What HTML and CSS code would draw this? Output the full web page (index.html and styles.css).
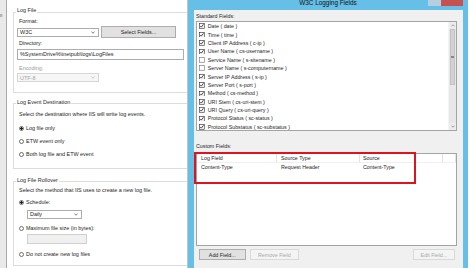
FILE: index.html
```html
<!DOCTYPE html>
<html>
<head>
<meta charset="utf-8">
<link rel="stylesheet" href="styles.css">
</head>
<body>
<div class="screen">
  <div class="edge"><span class="edge-text">m</span></div>

  <div class="left">
    <fieldset class="group g1">
      <legend>Log File</legend>
      <div class="lbl l-format">Format:</div>
      <div class="row">
        <div class="combo c-format"><span>W3C</span><svg class="chev" viewBox="0 0 4 3" width="4" height="3"><path d="M0.4 0.7 L2 2.2 L3.6 0.7"/></svg></div>
        <div class="btn sel-btn">Select Fields...</div>
      </div>
      <div class="lbl l-dir">Directory:</div>
      <div class="textbox dir">%SystemDrive%\inetpub\logs\LogFiles</div>
      <div class="lbl l-enc disabled">Encoding:</div>
      <div class="combo c-enc disabled"><span>UTF-8</span><svg class="chev" viewBox="0 0 4 3" width="4" height="3"><path d="M0.4 0.7 L2 2.2 L3.6 0.7"/></svg></div>
    </fieldset>

    <fieldset class="group g2">
      <legend>Log Event Destination</legend>
      <div class="lbl desc">Select the destination where IIS will write log events.</div>
      <div class="radios">
        <div class="radio-row"><span class="radio on"></span><span>Log file only</span></div>
        <div class="radio-row"><span class="radio"></span><span>ETW event only</span></div>
        <div class="radio-row"><span class="radio"></span><span>Both log file and ETW event</span></div>
      </div>
    </fieldset>

    <fieldset class="group g3">
      <legend>Log File Rollover</legend>
      <div class="lbl desc3">Select the method that IIS uses to create a new log file.</div>
      <div class="radio-row r-sched"><span class="radio on"></span><span>Schedule:</span></div>
      <div class="combo c-daily"><span>Daily</span><svg class="chev" viewBox="0 0 4 3" width="4" height="3"><path d="M0.4 0.7 L2 2.2 L3.6 0.7"/></svg></div>
      <div class="radio-row r-max"><span class="radio"></span><span>Maximum file size (in bytes):</span></div>
      <div class="textbox t-size"></div>
      <div class="radio-row r-none"><span class="radio"></span><span>Do not create new log files</span></div>
    </fieldset>
  </div>

  <div class="dialog">
    <div class="titlebar">
      <div class="title">W3C Logging Fields</div>
      <div class="tb-btns"><span class="tb-min"></span><span class="tb-close"></span></div>
    </div>
    <div class="dlg-body">
      <div class="sf-label">Standard Fields:</div>
      <div class="listbox">
        <div class="items">
          <div class="item"><svg class="cb" viewBox="0 0 6 6" width="5.6" height="5.6"><rect x="0.35" y="0.35" width="5.3" height="5.3"/><path d="M1.2 3.1 L2.5 4.4 L4.8 1.4"/></svg><span>Date ( date )</span></div>
          <div class="item"><svg class="cb" viewBox="0 0 6 6" width="5.6" height="5.6"><rect x="0.35" y="0.35" width="5.3" height="5.3"/><path d="M1.2 3.1 L2.5 4.4 L4.8 1.4"/></svg><span>Time ( time )</span></div>
          <div class="item"><svg class="cb" viewBox="0 0 6 6" width="5.6" height="5.6"><rect x="0.35" y="0.35" width="5.3" height="5.3"/><path d="M1.2 3.1 L2.5 4.4 L4.8 1.4"/></svg><span>Client IP Address ( c-ip )</span></div>
          <div class="item"><svg class="cb" viewBox="0 0 6 6" width="5.6" height="5.6"><rect x="0.35" y="0.35" width="5.3" height="5.3"/><path d="M1.2 3.1 L2.5 4.4 L4.8 1.4"/></svg><span>User Name ( cs-username )</span></div>
          <div class="item"><svg class="cb off" viewBox="0 0 6 6" width="5.6" height="5.6"><rect x="0.35" y="0.35" width="5.3" height="5.3"/></svg><span>Service Name ( s-sitename )</span></div>
          <div class="item"><svg class="cb off" viewBox="0 0 6 6" width="5.6" height="5.6"><rect x="0.35" y="0.35" width="5.3" height="5.3"/></svg><span>Server Name ( s-computername )</span></div>
          <div class="item"><svg class="cb" viewBox="0 0 6 6" width="5.6" height="5.6"><rect x="0.35" y="0.35" width="5.3" height="5.3"/><path d="M1.2 3.1 L2.5 4.4 L4.8 1.4"/></svg><span>Server IP Address ( s-ip )</span></div>
          <div class="item"><svg class="cb" viewBox="0 0 6 6" width="5.6" height="5.6"><rect x="0.35" y="0.35" width="5.3" height="5.3"/><path d="M1.2 3.1 L2.5 4.4 L4.8 1.4"/></svg><span>Server Port ( s-port )</span></div>
          <div class="item"><svg class="cb" viewBox="0 0 6 6" width="5.6" height="5.6"><rect x="0.35" y="0.35" width="5.3" height="5.3"/><path d="M1.2 3.1 L2.5 4.4 L4.8 1.4"/></svg><span>Method ( cs-method )</span></div>
          <div class="item"><svg class="cb" viewBox="0 0 6 6" width="5.6" height="5.6"><rect x="0.35" y="0.35" width="5.3" height="5.3"/><path d="M1.2 3.1 L2.5 4.4 L4.8 1.4"/></svg><span>URI Stem ( cs-uri-stem )</span></div>
          <div class="item"><svg class="cb" viewBox="0 0 6 6" width="5.6" height="5.6"><rect x="0.35" y="0.35" width="5.3" height="5.3"/><path d="M1.2 3.1 L2.5 4.4 L4.8 1.4"/></svg><span>URI Query ( cs-uri-query )</span></div>
          <div class="item"><svg class="cb" viewBox="0 0 6 6" width="5.6" height="5.6"><rect x="0.35" y="0.35" width="5.3" height="5.3"/><path d="M1.2 3.1 L2.5 4.4 L4.8 1.4"/></svg><span>Protocol Status ( sc-status )</span></div>
          <div class="item"><svg class="cb" viewBox="0 0 6 6" width="5.6" height="5.6"><rect x="0.35" y="0.35" width="5.3" height="5.3"/><path d="M1.2 3.1 L2.5 4.4 L4.8 1.4"/></svg><span>Protocol Substatus ( sc-substatus )</span></div>
        </div>
        <div class="scroll">
          <div class="sb-arrow"><svg viewBox="0 0 4 3" width="4" height="3"><path d="M0.5 2.3 L2 0.8 L3.5 2.3"/></svg></div>
          <div class="sb-thumb"><span class="grip"></span></div>
          <div class="sb-track"></div>
          <div class="sb-arrow"><svg viewBox="0 0 4 3" width="4" height="3"><path d="M0.5 0.7 L2 2.2 L3.5 0.7"/></svg></div>
        </div>
      </div>

      <div class="cf-label">Custom Fields:</div>
      <div class="custom">
        <div class="lv-head">
          <div class="col c1">Log Field</div>
          <div class="col c2">Source Type</div>
          <div class="col c3">Source</div>
          <div class="col c4"></div>
        </div>
        <div class="lv-row">
          <div class="col c1">Content-Type</div>
          <div class="col c2">Request Header</div>
          <div class="col c3">Content-Type</div>
        </div>
      </div>

      <div class="btns">
        <div class="btn-group">
          <div class="btn b-add">Add Field...</div>
          <div class="btn b-remove dis">Remove Field</div>
        </div>
        <div class="btn b-edit dis">Edit Field...</div>
      </div>

      <div class="highlight"></div>
    </div>
  </div>

  <div class="right-strip"></div>
</div>
</body>
</html>
```

FILE: styles.css
```css
* { box-sizing: border-box; }

html, body {
  margin: 0;
  padding: 0;
  background: #ffffff;
}

body {
  font-family: "Liberation Sans", Arial, sans-serif;
  font-size: 5.3px;
  color: #1e1e1e;
}

.screen {
  display: flex;
  width: 474px;
  height: 268px;
  overflow: hidden;
}

/* far left strip */
.edge {
  width: 7px;
  flex: none;
  background: #e9e9e9;
  border-right: 1px solid #a9a9a9;
  overflow: hidden;
  padding-top: 12px;
}
.edge-text {
  display: block;
  margin-left: -2px;
  line-height: 6px;
  color: #555;
}

/* left property panel */
.left {
  width: 181px;
  flex: none;
  background: #ffffff;
  border-right: 1px solid #c4c4c4;
  overflow: hidden;
  padding-top: 7px;
  font-size: 5.45px;
}

.group {
  margin: 0 -8px 0 6px;
  padding: 0 0 0 3px;
  border: 1px solid #dcdcdc;
  min-width: 0;
}
.group legend {
  margin-left: -1px;
  padding: 0 1px 3px 1px;
  line-height: 7px;
  color: #2b2b2b;
}
.g1 { padding-bottom: 10px; }
.g2 { margin-top: 5.5px; padding-bottom: 7.5px; }
.g3 { margin-top: 7.5px; padding-bottom: 6.5px; }

.lbl {
  line-height: 7px;
  padding-left: 2px;
  white-space: nowrap;
}
.lbl.disabled { color: #9a9a9a; }
.l-format { margin-top: 0.5px; }
.l-dir { margin-top: 1.5px; }
.l-enc { margin-top: 5px; }
.desc { margin-top: 2px; }
.desc3 { margin-top: 0; }

.row {
  display: flex;
  align-items: center;
  gap: 2px;
  height: 12px;
  margin-top: 1.5px;
}

.combo {
  display: flex;
  align-items: center;
  justify-content: space-between;
  background: #ffffff;
  border: 1px solid #acacac;
  padding: 0 3px 0 2px;
  height: 9px;
  white-space: nowrap;
}
.combo .chev {
  fill: none;
  stroke: #444;
  stroke-width: 0.7;
}
.combo.disabled {
  background: #f6f6f6;
  border-color: #d6d6d6;
  color: #a3a3a3;
}
.combo.disabled .chev { stroke: #b0b0b0; }
.c-format { width: 82px; }
.c-enc { width: 82px; margin-top: 1.5px; }
.c-daily { width: 55px; height: 8.5px; margin: 3.5px 0 0 10px; }

.btn {
  display: flex;
  align-items: center;
  justify-content: center;
  background: #e1e1e1;
  border: 1px solid #adadad;
  white-space: nowrap;
}
.sel-btn { width: 75px; height: 12px; }

.textbox {
  background: #ffffff;
  border: 1px solid #abadb3;
  white-space: nowrap;
  overflow: hidden;
}
.dir {
  width: 167px;
  height: 10.5px;
  line-height: 8.5px;
  padding-left: 2px;
  margin-top: 2.5px;
}
.t-size {
  width: 60px;
  height: 10px;
  margin: 1.5px 0 0 10px;
  background: #f0f0f0;
  border-color: #cfcfcf;
}

.radios { margin-top: 4px; }
.radio-row {
  display: flex;
  align-items: center;
  gap: 2.5px;
  padding-left: 1.5px;
  height: 13px;
  white-space: nowrap;
}
.radio {
  width: 5px;
  height: 5px;
  flex: none;
  border-radius: 50%;
  border: 0.7px solid #6f6f6f;
  background: #ffffff;
}
.radio.on {
  background: radial-gradient(circle, #1e1e1e 0 1.1px, #ffffff 1.4px);
}
.r-sched { height: 9px; margin-top: 4px; }
.r-max { height: 9px; margin-top: 5px; }
.r-none { height: 9px; margin-top: 5.5px; }

/* dialog */
.dialog {
  width: 280px;
  flex: none;
  display: flex;
  flex-direction: column;
  background: #66bfe6;
}
.titlebar {
  height: 10px;
  display: flex;
  flex: none;
}
.title {
  flex: 1;
  text-align: center;
  padding-left: 40px;
  font-size: 6.4px;
  line-height: 7px;
  margin-top: -1.5px;
  color: #101010;
  white-space: nowrap;
}
.tb-btns {
  display: flex;
  margin-right: 5px;
  height: 5.5px;
}
.tb-min { width: 13px; background: #b4cfe2; }
.tb-close { width: 22px; background: #c75050; }

.dlg-body {
  flex: 1;
  margin: 0 5px 0 6px;
  background: #f0f0f0;
  position: relative;
}
.sf-label {
  margin: 3px 0 0 2px;
  line-height: 7px;
}
.listbox {
  display: flex;
  margin: 1px 6px 0 2px;
  height: 110px;
  border: 1px solid #a4a4a4;
  background: #ffffff;
}
.items { flex: 1; }
.item {
  display: flex;
  align-items: center;
  gap: 3.2px;
  height: 8.4px;
  padding-left: 2px;
  white-space: nowrap;
}
.cb { flex: none; }
.cb rect { fill: #ffffff; stroke: #333333; stroke-width: 0.7; }
.cb path { fill: none; stroke: #1e1e1e; stroke-width: 0.9; }
.cb.off rect { stroke: #777777; }

.scroll {
  width: 8px;
  flex: none;
  display: flex;
  flex-direction: column;
  background: #e8e8e8;
  border-left: 1px solid #f4f4f4;
}
.sb-arrow {
  height: 7px;
  display: flex;
  align-items: center;
  justify-content: center;
  background: #ececec;
}
.sb-arrow svg { fill: none; stroke: #777; stroke-width: 0.7; }
.sb-thumb {
  height: 56px;
  margin: 0 1px;
  background: #d2d2d2;
  border: 0.5px solid #c2c2c2;
  display: flex;
  align-items: center;
  justify-content: center;
}
.grip { width: 3px; height: 2px; border-top: 0.6px solid #888; border-bottom: 0.6px solid #888; }
.sb-track { flex: 1; }

.cf-label {
  margin: 12.2px 0 0 2px;
  line-height: 7px;
}
.custom {
  margin: 2.8px 6px 0 2px;
  height: 93px;
  border: 1px solid #a4a4a4;
  background: #ffffff;
}
.lv-head {
  display: flex;
  height: 9px;
  align-items: stretch;
  border-bottom: 0.5px solid #efefef;
}
.lv-head .col {
  border-right: 1px solid #e3e3e3;
}
.lv-row {
  display: flex;
  height: 8.5px;
}
.col {
  display: flex;
  align-items: center;
  padding-left: 4px;
  white-space: nowrap;
  flex: none;
}
.c1 { width: 80px; }
.c2 { width: 83px; }
.c3 { width: 83px; padding-left: 3px; }
.c4 { width: 13px; }

.btns {
  display: flex;
  justify-content: space-between;
  margin: 3.5px 8px 0 5px;
}
.btn-group { display: flex; gap: 4.3px; }
.btns .btn { height: 10.5px; }
.b-add { width: 46.5px; }
.b-remove { width: 49px; }
.b-edit { width: 42.3px; }
.btn.dis {
  background: #f4f4f4;
  border-color: #d9d9d9;
  color: #a8a8a8;
}

.highlight {
  position: absolute;
  left: 0;
  top: 142px;
  width: 222px;
  height: 32px;
  border: 2px solid #dc141e;
}

.right-strip {
  flex: 1;
  background: #ffffff;
}
```
